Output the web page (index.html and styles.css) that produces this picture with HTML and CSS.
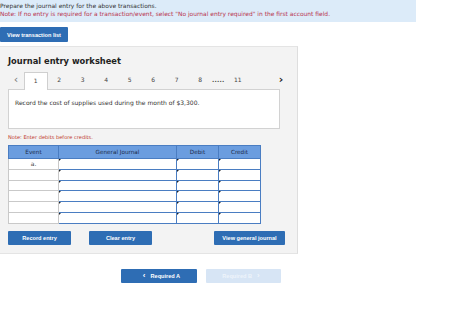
FILE: index.html
```html
<!DOCTYPE html>
<html>
<head>
  <title>Journal entry worksheet</title>
  <link rel="stylesheet" href="styles.css">
</head>
<body>

  <div class="banner">
    <div>Prepare the journal entry for the above transactions.</div>
    <div class="red">Note: If no entry is required for a transaction/event, select "No journal entry required" in the first account field.</div>
  </div>

  <button class="btn list-btn">View transaction list</button>

  <div class="panel">
    <h1>Journal entry worksheet</h1>

    <div class="tabs">
      <span class="arrow prev">&lsaquo;</span>
      <span class="tab active">1</span>
      <span class="tab">2</span>
      <span class="tab">3</span>
      <span class="tab">4</span>
      <span class="tab">5</span>
      <span class="tab">6</span>
      <span class="tab">7</span>
      <span class="tab">8</span>
      <span class="dots">.....</span>
      <span class="tab">11</span>
      <span class="arrow next">&rsaquo;</span>
    </div>

    <div class="desc">Record the cost of supplies used during the month of $3,300.</div>

    <div class="note">Note: Enter debits before credits.</div>

    <table class="journal">
      <tr>
        <th class="c-event">Event</th>
        <th class="c-acct">General Journal</th>
        <th class="c-amt">Debit</th>
        <th class="c-amt">Credit</th>
      </tr>
      <tr><td class="event">a.</td><td class="inp"></td><td class="inp"></td><td class="inp"></td></tr>
      <tr><td class="event"></td><td class="inp"></td><td class="inp"></td><td class="inp"></td></tr>
      <tr><td class="event"></td><td class="inp"></td><td class="inp"></td><td class="inp"></td></tr>
      <tr><td class="event"></td><td class="inp"></td><td class="inp"></td><td class="inp"></td></tr>
      <tr><td class="event"></td><td class="inp"></td><td class="inp"></td><td class="inp"></td></tr>
      <tr><td class="event"></td><td class="inp"></td><td class="inp"></td><td class="inp"></td></tr>
    </table>

    <div class="actions">
      <button class="btn record">Record entry</button>
      <button class="btn clear">Clear entry</button>
      <button class="btn view">View general journal</button>
    </div>
  </div>

  <div class="nav">
    <button class="btn req-a"><span class="chev">&lsaquo;</span> Required A</button>
    <button class="btn req-b">Required B <span class="chev">&rsaquo;</span></button>
  </div>

</body>
</html>
```

FILE: styles.css
```css
body {
  margin: 0;
  font-family: "DejaVu Sans", Verdana, sans-serif;
  font-size: 6px;
  color: #333;
  background: #fff;
}
.banner {
  width: 416px;
  height: 22px;
  box-sizing: border-box;
  padding-top: 2px;
  background: #dcebf9;
  line-height: 8px;
  font-size: 5.95px;
}
.banner .red {
  color: #b8334e;
}
.btn {
  display: flex;
  align-items: center;
  justify-content: center;
  border: none;
  border-radius: 1px;
  padding: 0;
  background: #2e6db4;
  color: #fff;
  font-family: "Liberation Sans", Arial, sans-serif;
  font-size: 5.6px;
  font-weight: bold;
  height: 14px;
}
.list-btn {
  margin-top: 5px;
  width: 68px;
  height: 15px;
}
.panel {
  margin-top: 4px;
  width: 298px;
  height: 208px;
  box-sizing: border-box;
  padding: 0 0 0 8px;
  background: #f3f3f3;
  border-top: 1px solid #e4e4e4;
  border-right: 1px solid #dedede;
  border-bottom: 1px solid #e4e4e4;
}
h1 {
  margin: 0;
  padding-top: 9px;
  height: 21px;
  box-sizing: border-box;
  font-size: 8.3px;
  line-height: 10px;
  color: #222;
}
.tabs {
  display: flex;
  align-items: stretch;
  margin-top: 4px;
  height: 17px;
  width: 278px;
  position: relative;
  z-index: 1;
}
.arrow {
  width: 16px;
  display: flex;
  align-items: center;
  justify-content: center;
  font-size: 11px;
  color: #777;
  padding-bottom: 3px;
  box-sizing: border-box;
}
.arrow.next {
  margin-left: auto;
  width: 10px;
  color: #222;
  font-weight: bold;
}
.tab {
  width: 23.5px;
  display: flex;
  align-items: center;
  justify-content: center;
  padding-bottom: 3px;
  box-sizing: border-box;
  color: #444;
}
.tab.active {
  background: #fff;
  border: 1px solid #cfcfcf;
  border-bottom: none;
  height: 18px;
}
.dots {
  width: 14px;
  display: flex;
  align-items: center;
  padding-bottom: 3px;
  box-sizing: border-box;
  font-weight: bold;
  letter-spacing: 0.2px;
  color: #444;
}
.desc {
  width: 272px;
  height: 40px;
  box-sizing: border-box;
  background: #fff;
  border: 1px solid #d2d2d2;
  padding: 9px 0 0 6px;
  color: #333;
}
.note {
  margin-top: 5px;
  height: 11px;
  color: #c0392b;
  font-size: 5.1px;
}
.journal {
  border-collapse: collapse;
  width: 250px;
  table-layout: fixed;
  border: 1px solid #4a7dc2;
}
.journal th {
  height: 12px;
  padding: 0;
  background: #6b9ddf;
  border: 1px solid #4a7dc2;
  color: #1d2b4a;
  font-weight: normal;
  font-size: 5.7px;
}
.c-event { width: 49px; }
.c-acct { width: 117px; }
.c-amt { width: 41px; }
.journal td {
  height: 10.8px;
  box-sizing: border-box;
  padding: 0;
  background: #fff;
}
.journal td.event {
  border: 1px solid #c9c9c9;
  text-align: center;
  vertical-align: top;
  padding-top: 1px;
  color: #333;
}
.journal td.inp {
  border: 1.5px solid #4a7dc2;
  position: relative;
}
.journal td.inp::before {
  content: "";
  position: absolute;
  left: 0;
  top: 0;
  border-top: 2px solid #222;
  border-right: 2px solid transparent;
}
.actions {
  display: flex;
  margin-top: 7px;
}
.record { width: 63px; }
.clear { width: 63px; margin-left: 18px; }
.view { width: 71px; margin-left: 62px; }
.nav {
  display: flex;
  margin-top: 15px;
  padding-left: 121px;
}
.req-a { width: 76px; }
.req-b {
  width: 75px;
  margin-left: 9px;
  background: #d7e5f5;
  color: #eef4fb;
}
.chev {
  font-size: 8px;
  margin: 0 5px;
  position: relative;
  top: -0.5px;
}
```
